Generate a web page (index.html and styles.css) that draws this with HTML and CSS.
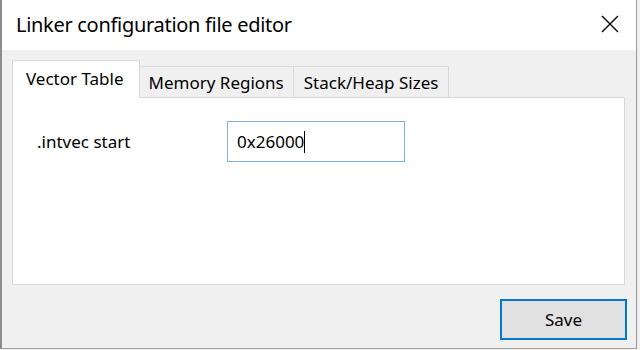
FILE: index.html
```html
<!DOCTYPE html>
<html lang="en">
<head>
    <meta charset="UTF-8">
    <title>Linker configuration file editor</title>
    <link rel="stylesheet" href="styles.css">
</head>
<body>
    <div class="window">
        <div class="titlebar">
            <span class="title">Linker configuration file editor</span>
            <svg class="close" width="18" height="18" viewBox="0 0 18 18">
                <path d="M1 1 L17 17 M17 1 L1 17" stroke="#000" stroke-width="1.4" fill="none"/>
            </svg>
        </div>
        <div class="content">
            <div class="tabs">
                <div class="tab active">Vector Table</div>
                <div class="tab">Memory Regions</div>
                <div class="tab">Stack/Heap Sizes</div>
            </div>
            <div class="panel">
                <div class="row">
                    <label for="intvec">.intvec start</label>
                    <div class="field"><span id="intvec">0x26000</span><span class="caret"></span></div>
                </div>
            </div>
            <div class="footer">
                <button class="save">Save</button>
            </div>
        </div>
    </div>
</body>
</html>
```

FILE: styles.css
```css
body {
    margin: 0;
    background: #f0f0f0;
    font-family: 'Noto Sans', 'Open Sans', sans-serif;
    color: #000;
}
.window {
    width: 634px;
    height: 348px;
    border-left: 2px solid #8c8c8c;
    border-right: 1px solid #9a9a9a;
    border-bottom: 1px solid #a0a0a0;
    display: flex;
    flex-direction: column;
    background: #f0f0f0;
}
.titlebar {
    height: 50px;
    background: #fff;
    display: flex;
    align-items: center;
    justify-content: space-between;
    padding: 0 17px 0 14px;
    flex-shrink: 0;
}
.title {
    font-size: 20px;
    letter-spacing: -0.3px;
    margin-top: -1px;
}
.close {
    margin-top: -2px;
}
.content {
    flex: 1;
    display: flex;
    flex-direction: column;
    padding: 13px 11px 0 10px;
}
.tabs {
    display: flex;
    align-items: flex-end;
    height: 34px;
    position: relative;
    z-index: 1;
}
.tab {
    height: 30px;
    padding: 0 9px;
    border: 1px solid #d9d9d9;
    border-bottom: none;
    border-left: none;
    background: #f0f0f0;
    font-size: 17px;
    display: flex;
    align-items: center;
}
.tab:last-child {
    padding: 0 10px;
}
.tab.active {
    height: 35px;
    background: #fff;
    border-left: 1px solid #d9d9d9;
    padding: 0 15px 2px 13px;
    margin-bottom: -1px;
}
.panel {
    height: 188px;
    background: #fff;
    border: 1px solid #d9d9d9;
    padding: 23px 24px;
    box-sizing: border-box;
}
.row {
    display: flex;
    align-items: center;
}
.row label {
    width: 190px;
    font-size: 17px;
}
.field {
    width: 158px;
    height: 39px;
    border: 1px solid #7eb4ea;
    padding: 0 9px;
    display: flex;
    align-items: center;
    font-size: 17px;
}
.caret {
    display: inline-block;
    width: 1px;
    height: 22px;
    background: #000;
}
.footer {
    display: flex;
    justify-content: flex-end;
    padding-top: 14px;
    margin-right: -2px;
}
.save {
    width: 127px;
    height: 41px;
    border: 2px solid #0078d7;
    background: #e1e1e1;
    font-family: inherit;
    font-size: 17px;
    color: #000;
}
```
